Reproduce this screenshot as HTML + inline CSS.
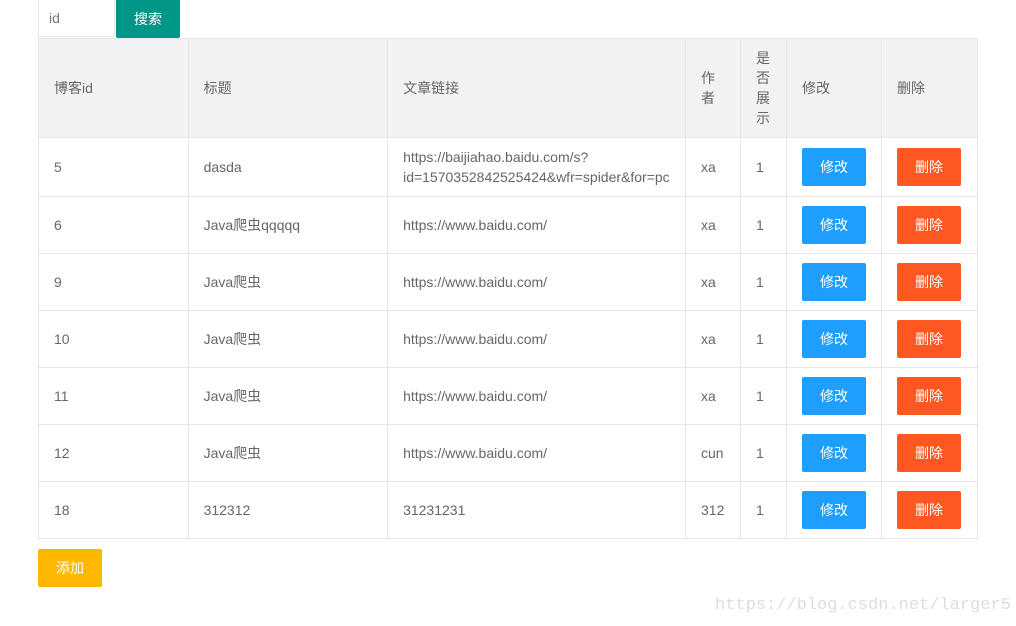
<!DOCTYPE html>
<html><head><meta charset="utf-8"><style>
body{margin:0;width:1016px;height:626px;background:#fff;position:relative;font-family:"Liberation Sans","Noto Sans CJK SC",sans-serif;font-size:14px;color:#666;overflow:hidden}
.a{position:absolute}
.inp{left:38px;top:0;width:77px;height:37px;border:1px solid #e6e6e6;border-top:0;box-sizing:border-box;line-height:37px;padding-left:10px;color:#777}
.sb{left:116px;top:0;width:64px;height:38px;background:#009688;color:#fff;line-height:38px;text-align:center;border-radius:0 0 2px 2px}
table{position:absolute;left:38px;top:38px;border-collapse:collapse;width:940px}
td{border:1px solid #e6e6e6;padding:0 15px;box-sizing:border-box;line-height:20px}
tr.h td{background:#f2f2f2;height:99px}
.btn{display:inline-block;width:64px;height:38px;line-height:38px;text-align:center;color:#fff;border-radius:2px}
.m{background:#1E9FFF}.d{background:#FF5722}
.add{left:38px;top:549px;width:64px;height:38px;line-height:38px;text-align:center;background:#FFB800;color:#fff;border-radius:2px}
.wm{left:715px;top:596px;font-family:"Liberation Mono","DejaVu Serif",monospace;font-size:17px;color:#ddd}
</style></head><body>
<div class="a inp">id</div>
<div class="a sb">搜索</div>
<table>
<colgroup><col style="width:150px"><col style="width:200px"><col style="width:298px"><col style="width:55px"><col style="width:46px"><col style="width:95px"><col style="width:96px"></colgroup>
<tr class="h"><td>博客id</td><td>标题</td><td>文章链接</td><td style="padding:0 0 0 15px">作<br>者</td><td style="padding:0 0 0 15px">是<br>否<br>展<br>示</td><td>修改</td><td>删除</td></tr>
<tr style="height:59px"><td>5</td><td>dasda</td><td style="padding-right:0">https://baijiahao.baidu.com/s?<br>id=1570352842525424&amp;wfr=spider&amp;for=pc</td><td>xa</td><td>1</td><td><span class="btn m">修改</span></td><td><span class="btn d">删除</span></td></tr>
<tr style="height:57px"><td>6</td><td>Java爬虫qqqqq</td><td>https://www.baidu.com/</td><td>xa</td><td>1</td><td><span class="btn m">修改</span></td><td><span class="btn d">删除</span></td></tr>
<tr style="height:57px"><td>9</td><td>Java爬虫</td><td>https://www.baidu.com/</td><td>xa</td><td>1</td><td><span class="btn m">修改</span></td><td><span class="btn d">删除</span></td></tr>
<tr style="height:57px"><td>10</td><td>Java爬虫</td><td>https://www.baidu.com/</td><td>xa</td><td>1</td><td><span class="btn m">修改</span></td><td><span class="btn d">删除</span></td></tr>
<tr style="height:57px"><td>11</td><td>Java爬虫</td><td>https://www.baidu.com/</td><td>xa</td><td>1</td><td><span class="btn m">修改</span></td><td><span class="btn d">删除</span></td></tr>
<tr style="height:57px"><td>12</td><td>Java爬虫</td><td>https://www.baidu.com/</td><td>cun</td><td>1</td><td><span class="btn m">修改</span></td><td><span class="btn d">删除</span></td></tr>
<tr style="height:57px"><td>18</td><td>312312</td><td>31231231</td><td>312</td><td>1</td><td><span class="btn m">修改</span></td><td><span class="btn d">删除</span></td></tr>
</table>
<div class="a add">添加</div>
<div class="a wm">https://blog.csdn.net/larger5</div>
</body></html>
